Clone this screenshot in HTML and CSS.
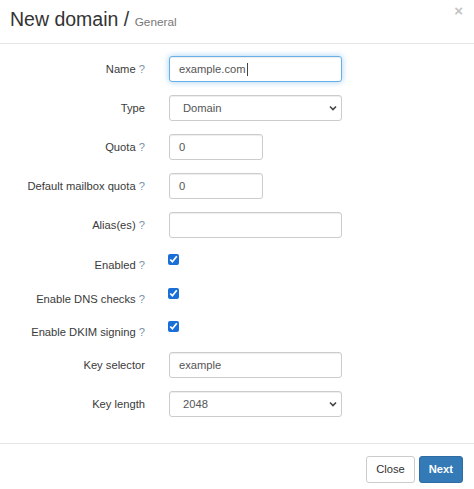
FILE: index.html
```html
<!DOCTYPE html>
<html lang="en">
<head>
<meta charset="utf-8">
<title>New domain</title>
<link rel="stylesheet" href="styles.css">
</head>
<body>
<div class="modal">
  <div class="modal-header">
    <button type="button" class="close" aria-label="Close">×</button>
    <h3 class="modal-title">New domain / <small>General</small></h3>
  </div>
  <form class="modal-body">
    <div class="row">
      <label class="lbl">Name <span class="help">?</span></label>
      <div class="form-control focused">example.com<span class="caret"></span></div>
    </div>
    <div class="row">
      <label class="lbl">Type</label>
      <div class="select-wrap">
        <select class="form-control select"><option>Domain</option></select>
        <svg class="chev" width="8" height="6" viewBox="0 0 8 6"><path d="M1 1.5 L4 4.5 L7 1.5" fill="none" stroke="#444" stroke-width="1.6"/></svg>
      </div>
    </div>
    <div class="row">
      <label class="lbl">Quota <span class="help">?</span></label>
      <input class="form-control short" type="text" value="0">
    </div>
    <div class="row">
      <label class="lbl">Default mailbox quota <span class="help">?</span></label>
      <input class="form-control short" type="text" value="0">
    </div>
    <div class="row">
      <label class="lbl">Alias(es) <span class="help">?</span></label>
      <input class="form-control" type="text" value="">
    </div>
    <div class="row check-row">
      <label class="lbl">Enabled <span class="help">?</span></label>
      <div><input class="cb" type="checkbox" checked></div>
    </div>
    <div class="row check-row">
      <label class="lbl">Enable DNS checks <span class="help">?</span></label>
      <div><input class="cb" type="checkbox" checked></div>
    </div>
    <div class="row check-row">
      <label class="lbl">Enable DKIM signing <span class="help">?</span></label>
      <div><input class="cb" type="checkbox" checked></div>
    </div>
    <div class="row">
      <label class="lbl">Key selector</label>
      <input class="form-control" type="text" value="example">
    </div>
    <div class="row">
      <label class="lbl">Key length</label>
      <div class="select-wrap">
        <select class="form-control select"><option>2048</option></select>
        <svg class="chev" width="8" height="6" viewBox="0 0 8 6"><path d="M1 1.5 L4 4.5 L7 1.5" fill="none" stroke="#444" stroke-width="1.6"/></svg>
      </div>
    </div>
  </form>
  <div class="modal-footer">
    <button type="button" class="btn btn-default">Close</button>
    <button type="button" class="btn btn-primary">Next</button>
  </div>
</div>
</body>
</html>
```

FILE: styles.css
```css
* { box-sizing: border-box; }
html, body { margin: 0; padding: 0; background: #fff; }
body {
  font-family: "Liberation Sans", Arial, sans-serif;
  font-size: 11.2px;
  color: #333;
}
.modal { position: relative; width: 474px; }

.modal-header {
  height: 44px;
  padding: 7px 10px 0;
  border-bottom: 1px solid #e5e5e5;
}
.modal-title {
  margin: 0;
  font-size: 19.5px;
  font-weight: normal;
  line-height: 24px;
  color: #333;
}
.modal-title small { font-size: 11.8px; color: #777; }
.close {
  position: absolute;
  top: 1px;
  right: 11px;
  border: 0;
  background: none;
  padding: 0;
  font-family: "Liberation Sans", Arial, sans-serif;
  font-size: 15px;
  font-weight: bold;
  line-height: 20px;
  color: #c4c4c4;
}

.modal-body { padding: 12px 0 13px; margin: 0; }
.row {
  display: grid;
  grid-template-columns: 145px 173px;
  column-gap: 24px;
  align-items: center;
  margin-bottom: 13px;
}
.lbl {
  text-align: right;
  line-height: 16px;
  color: #3a3a3a;
}
.help { color: #7b93a8; }

.form-control {
  display: block;
  width: 173px;
  height: 26px;
  margin: 0;
  padding: 0 9px;
  font-family: "Liberation Sans", Arial, sans-serif;
  font-size: 11.2px;
  line-height: 24px;
  color: #555;
  background: #fff;
  border: 1px solid #ccc;
  border-radius: 3px;
  box-shadow: inset 0 1px 1px rgba(0,0,0,.075);
  outline: none;
}
.form-control.short { width: 94px; }
.focused {
  border-color: #66afe9;
  box-shadow: inset 0 1px 1px rgba(0,0,0,.075), 0 0 6px rgba(102,175,233,.6);
}
.caret {
  display: inline-block;
  width: 1px;
  height: 13px;
  background: #444;
  vertical-align: -3px;
  margin-left: 1px;
}
.select-wrap { position: relative; width: 173px; height: 26px; }
.select {
  -webkit-appearance: none;
  appearance: none;
  padding-left: 13px;
}
.chev { position: absolute; right: 5px; top: 10px; }

.check-row {
  align-items: start;
  height: 20.5px;
}
.check-row .lbl { padding-top: 6px; }
.cb {
  display: block;
  width: 11px;
  height: 11px;
  margin: 3px 0 0 -1px;
  accent-color: #1a6ed8;
}

.modal-footer {
  border-top: 1px solid #e5e5e5;
  padding: 12px 11px 12px;
  display: flex;
  justify-content: flex-end;
  gap: 4px;
}
.btn {
  height: 27px;
  padding: 0 9px;
  font-family: "Liberation Sans", Arial, sans-serif;
  font-size: 11.2px;
  line-height: 25px;
  border: 1px solid #ccc;
  border-radius: 3px;
  background: #fff;
  color: #333;
}
.btn-primary {
  background: #337ab7;
  border-color: #2e6da4;
  color: #fff;
  font-weight: bold;
}
```
